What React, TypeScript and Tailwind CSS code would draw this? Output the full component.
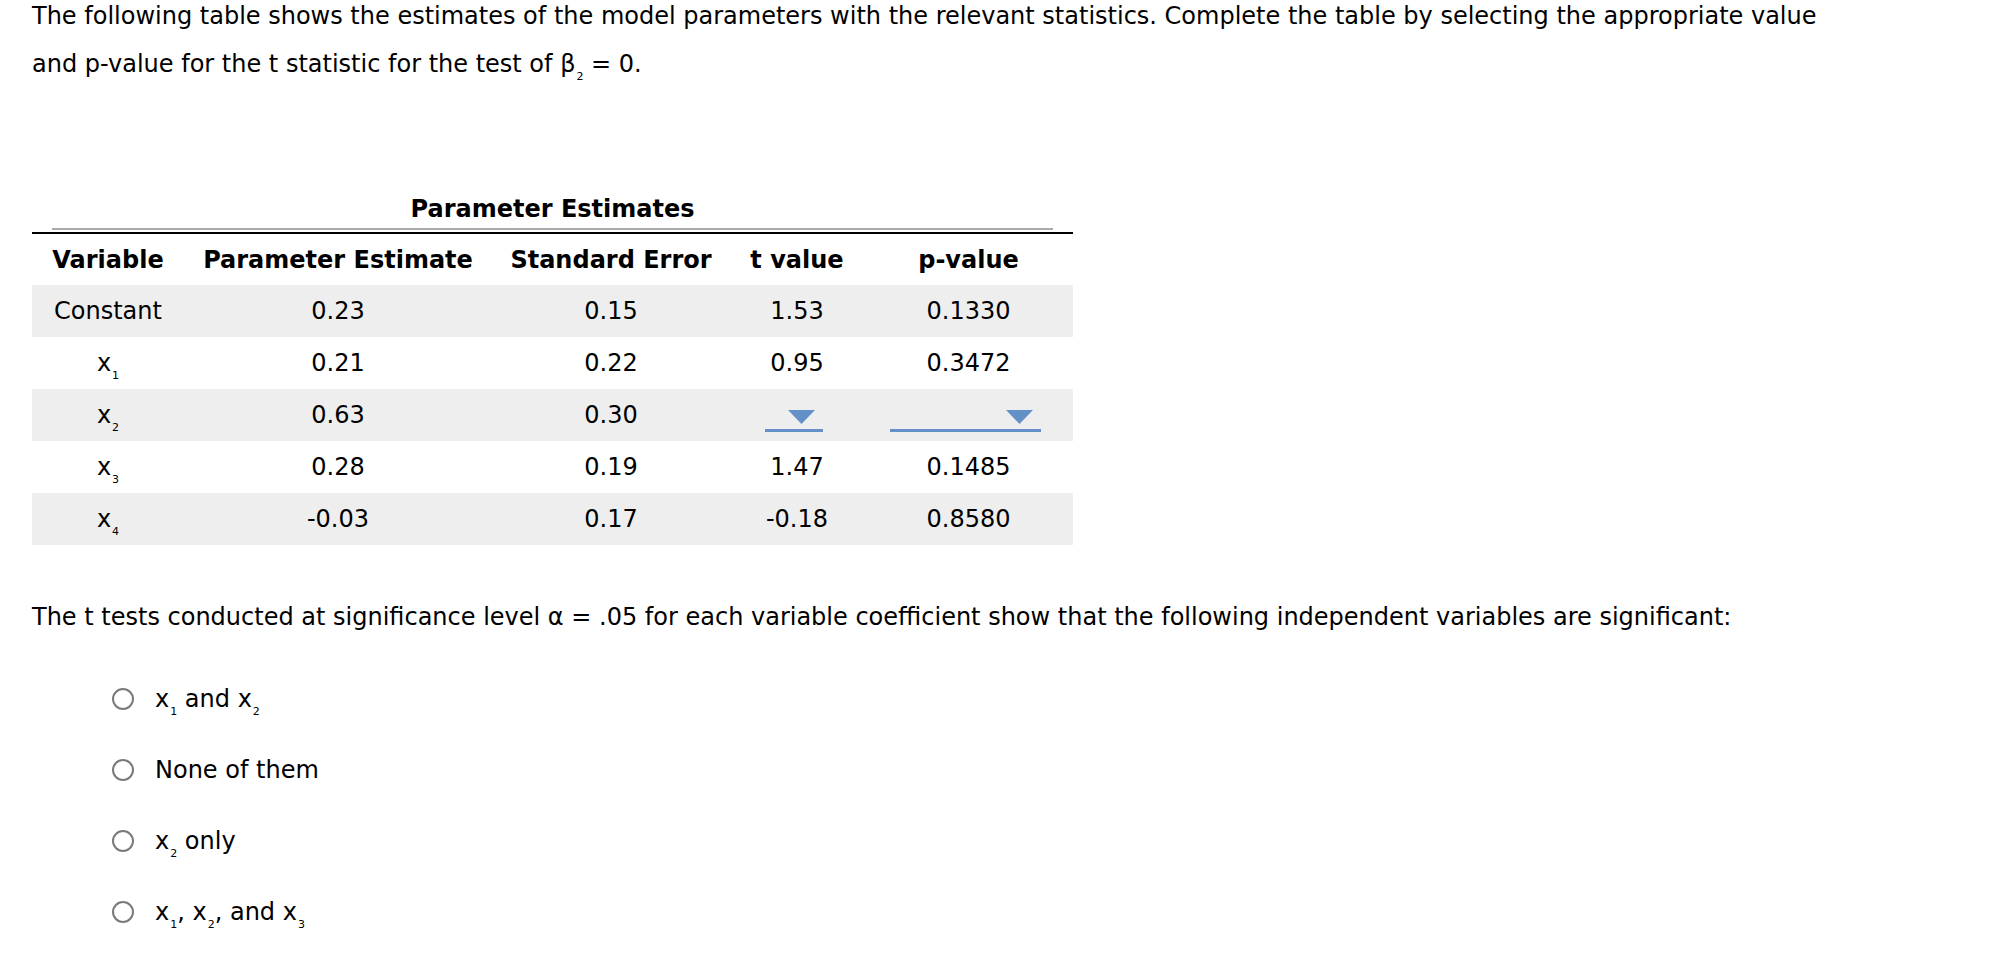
import React from "react";

// --- DATA ---
type Row = {
  v: React.ReactNode;
  est: string;
  se: string;
  t: string | null;
  p: string | null;
};

const Sub = ({ n }: { n: string }) => (
  <sub className="text-[11px] relative -bottom-[8px] ml-[1px]">{n}</sub>
);

const X = ({ n }: { n: string }) => (
  <span>
    x<Sub n={n} />
  </span>
);

const rows: Row[] = [
  { v: "Constant", est: "0.23", se: "0.15", t: "1.53", p: "0.1330" },
  { v: <X n="1" />, est: "0.21", se: "0.22", t: "0.95", p: "0.3472" },
  { v: <X n="2" />, est: "0.63", se: "0.30", t: null, p: null },
  { v: <X n="3" />, est: "0.28", se: "0.19", t: "1.47", p: "0.1485" },
  { v: <X n="4" />, est: "-0.03", se: "0.17", t: "-0.18", p: "0.8580" },
];

const cols = "grid grid-cols-[152px_308px_238px_134px_209px]";

// blue dropdown placeholder (underline + caret)
function Dropdown({ width }: { width: string }) {
  return (
    <div className={`${width} h-[24px] flex items-start justify-end border-b-[3px] border-[#6391c7] pr-[8px] mt-[10px]`}>
      <svg width="27" height="14" viewBox="0 0 27 14" className="mt-[2px]">
        <polygon points="0,0 27,0 13.5,14" fill="#6391c7" />
      </svg>
    </div>
  );
}

function Radio({ children }: { children: React.ReactNode }) {
  return (
    <label className="h-[71px] flex items-center gap-[21px] cursor-pointer">
      <span className="w-[22px] h-[22px] rounded-full border-2 border-[#7a7a7a] bg-white shrink-0" />
      <span>{children}</span>
    </label>
  );
}

export default function App() {
  return (
    <div
      className="w-full min-h-[962px] bg-white text-black text-[24px] pl-[32px]"
      style={{ fontFamily: "Verdana, 'DejaVu Sans', sans-serif" }}
    >
      {/* question */}
      <p className="leading-[48px] -mt-[8px]">
        The following table shows the estimates of the model parameters with the relevant statistics. Complete the table by selecting the appropriate value
        <br />
        and p-value for the t statistic for the test of β<Sub n="2" /> = 0.
      </p>

      {/* table */}
      <div className="w-[1041px] mt-[106px]">
        <div className="text-center font-bold leading-[30px]">Parameter Estimates</div>
        <div className="mx-[20px] h-[2px] bg-[#aaaaaa] mt-[4px]" />
        <div className="h-[2px] bg-black mt-[2px]" />

        <div className={`${cols} h-[51px] items-center font-bold text-center`}>
          <div>Variable</div>
          <div>Parameter Estimate</div>
          <div>Standard Error</div>
          <div>t value</div>
          <div>p-value</div>
        </div>

        {rows.map((r, i) => (
          <div
            key={i}
            className={`${cols} h-[52px] items-center text-center ${i % 2 === 0 ? "bg-[#eeeeee]" : "bg-white"}`}
          >
            <div>{r.v}</div>
            <div>{r.est}</div>
            <div>{r.se}</div>
            <div className="flex justify-center">
              {r.t ?? <Dropdown width="w-[58px] -ml-[6px]" />}
            </div>
            <div className="flex justify-center">
              {r.p ?? <Dropdown width="w-[151px] -ml-[6px]" />}
            </div>
          </div>
        ))}
      </div>

      {/* follow-up question */}
      <p className="leading-[48px] mt-[48px]">
        The t tests conducted at significance level α = .05 for each variable coefficient show that the following independent variables are significant:
      </p>

      <div className="ml-[80px] mt-[22px] flex flex-col">
        <Radio>
          <X n="1" /> and <X n="2" />
        </Radio>
        <Radio>None of them</Radio>
        <Radio>
          <X n="2" /> only
        </Radio>
        <Radio>
          <X n="1" />, <X n="2" />, and <X n="3" />
        </Radio>
      </div>
    </div>
  );
}
